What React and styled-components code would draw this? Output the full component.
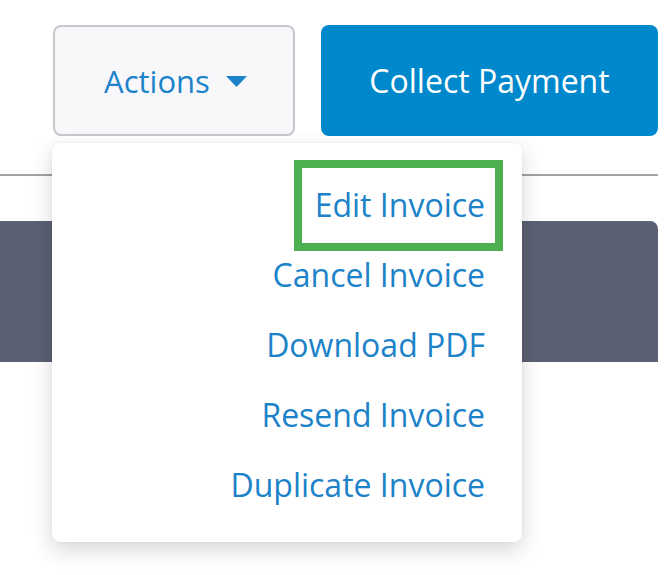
import React from "react";
import styled, { createGlobalStyle } from "styled-components";

const GlobalStyle = createGlobalStyle`
  body {
    margin: 0;
    background: #ffffff;
    font-family: "Open Sans", "Noto Sans", sans-serif;
  }
`;

const Page = styled.div`
  position: relative;
  width: 658px;
  min-height: 575px;
  box-sizing: border-box;
  padding-top: 25px;
`;

const Toolbar = styled.div`
  display: flex;
  justify-content: flex-end;
  gap: 26px;
`;

const ActionsButton = styled.button`
  display: flex;
  align-items: center;
  justify-content: center;
  gap: 15px;
  width: 242px;
  height: 111px;
  box-sizing: border-box;
  padding: 0 0 0 4px;
  border: 2px solid #c6c8ce;
  border-radius: 8px;
  background: #f8f8fb;
  color: #1c82c9;
  font-family: inherit;
  font-size: 31px;
  cursor: pointer;
`;

const PrimaryButton = styled.button`
  width: 337px;
  height: 111px;
  border: none;
  border-radius: 8px;
  background: #0088cc;
  color: #ffffff;
  font-family: inherit;
  font-size: 32px;
  cursor: pointer;
`;

const Divider = styled.hr`
  margin: 38px 0 0;
  border: none;
  border-top: 2px solid #a2a2a2;
`;

const HeaderBar = styled.div`
  margin-top: 45px;
  height: 141px;
  background: #5b6074;
  border-top-right-radius: 8px;
`;

const Menu = styled.div`
  position: absolute;
  top: 143px;
  left: 52px;
  width: 470px;
  height: 399px;
  box-sizing: border-box;
  padding: 26px 37px 0 0;
  background: #ffffff;
  border-radius: 8px;
  box-shadow: 0 8px 22px rgba(0, 0, 0, 0.16), 0 0 3px rgba(0, 0, 0, 0.06);
  display: flex;
  flex-direction: column;
  align-items: flex-end;
`;

const MenuItem = styled.a`
  position: relative;
  display: flex;
  align-items: center;
  height: 70px;
  color: #1c82c9;
  font-size: 32px;
  text-decoration: none;
  cursor: pointer;

  ${({ $highlighted }) =>
    $highlighted &&
    `
    &::after {
      content: "";
      position: absolute;
      top: -9px;
      bottom: -12px;
      left: -21px;
      right: -18px;
      border: 8px solid #4caf50;
    }
  `}
`;

const Caret = () => (
  <svg width="23" height="12" viewBox="0 0 23 12">
    <path d="M1 1 H22 L12.5 11 Q11.5 12 10.5 11 Z" fill="#1c82c9" />
  </svg>
);

const items = [
  "Edit Invoice",
  "Cancel Invoice",
  "Download PDF",
  "Resend Invoice",
  "Duplicate Invoice",
];

export default function App() {
  return (
    <>
      <GlobalStyle />
      <Page>
        <Toolbar>
          <ActionsButton>
            Actions
            <Caret />
          </ActionsButton>
          <PrimaryButton>Collect Payment</PrimaryButton>
        </Toolbar>
        <Divider />
        <HeaderBar />
        <Menu>
          {items.map((label, i) => (
            <MenuItem key={label} $highlighted={i === 0}>
              {label}
            </MenuItem>
          ))}
        </Menu>
      </Page>
    </>
  );
}
